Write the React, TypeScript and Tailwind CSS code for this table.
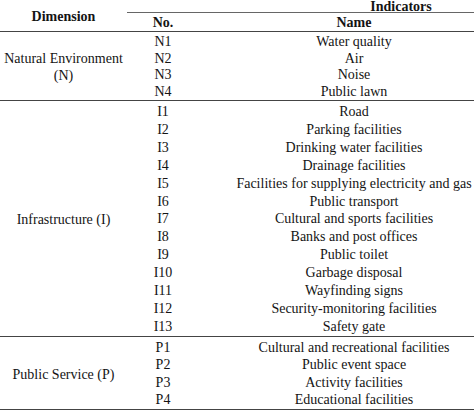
import React from "react";

type Group = { label: React.ReactNode; height: string; rows: [string, string][] };

const groups: Group[] = [
  {
    label: (
      <>
        Natural Environment
        <br />
        (N)
      </>
    ),
    height: "h-[69px]",
    rows: [
      ["N1", "Water quality"],
      ["N2", "Air"],
      ["N3", "Noise"],
      ["N4", "Public lawn"],
    ],
  },
  {
    label: "Infrastructure (I)",
    height: "h-[236px]",
    rows: [
      ["I1", "Road"],
      ["I2", "Parking facilities"],
      ["I3", "Drinking water facilities"],
      ["I4", "Drainage facilities"],
      ["I5", "Facilities for supplying electricity and gas"],
      ["I6", "Public transport"],
      ["I7", "Cultural and sports facilities"],
      ["I8", "Banks and post offices"],
      ["I9", "Public toilet"],
      ["I10", "Garbage disposal"],
      ["I11", "Wayfinding signs"],
      ["I12", "Security-monitoring facilities"],
      ["I13", "Safety gate"],
    ],
  },
  {
    label: "Public Service (P)",
    height: "h-[73px]",
    rows: [
      ["P1", "Cultural and recreational facilities"],
      ["P2", "Public event space"],
      ["P3", "Activity facilities"],
      ["P4", "Educational facilities"],
    ],
  },
];

export default function App() {
  return (
    <div className="w-[474px] h-[410px] overflow-hidden bg-white text-[#141414] text-[14px] font-['Liberation_Serif','Times_New_Roman',serif]">
      <div className="w-[675px]">
        {/* header */}
        <div className="flex h-[32px] border-b border-[#444]">
          <div className="w-[127px] flex items-center justify-center font-bold pt-[1px]">Dimension</div>
          <div className="flex-1 flex flex-col">
            <div className="h-[13px] border-b border-[#666] flex items-end justify-center font-bold leading-none">
              <span className="relative top-[2px]">Indicators</span>
            </div>
            <div className="flex-1 flex items-center font-bold leading-none pt-[1px]">
              <div className="w-[72px] text-center">No.</div>
              <div className="w-[310px] text-center">Name</div>
            </div>
          </div>
        </div>

        {groups.map((g, gi) => (
          <div key={gi} className={`flex border-b border-[#444] ${g.height}`}>
            <div className="w-[127px] flex items-center justify-center text-center leading-[17px] pt-[2px]">
              <span>{g.label}</span>
            </div>
            <div className="flex-1 flex flex-col justify-around leading-none pt-[2px]">
              {g.rows.map(([no, name]) => (
                <div key={no} className="flex">
                  <div className="w-[72px] text-center">{no}</div>
                  <div className="w-[310px] text-center whitespace-nowrap">{name}</div>
                </div>
              ))}
            </div>
          </div>
        ))}
      </div>
    </div>
  );
}
